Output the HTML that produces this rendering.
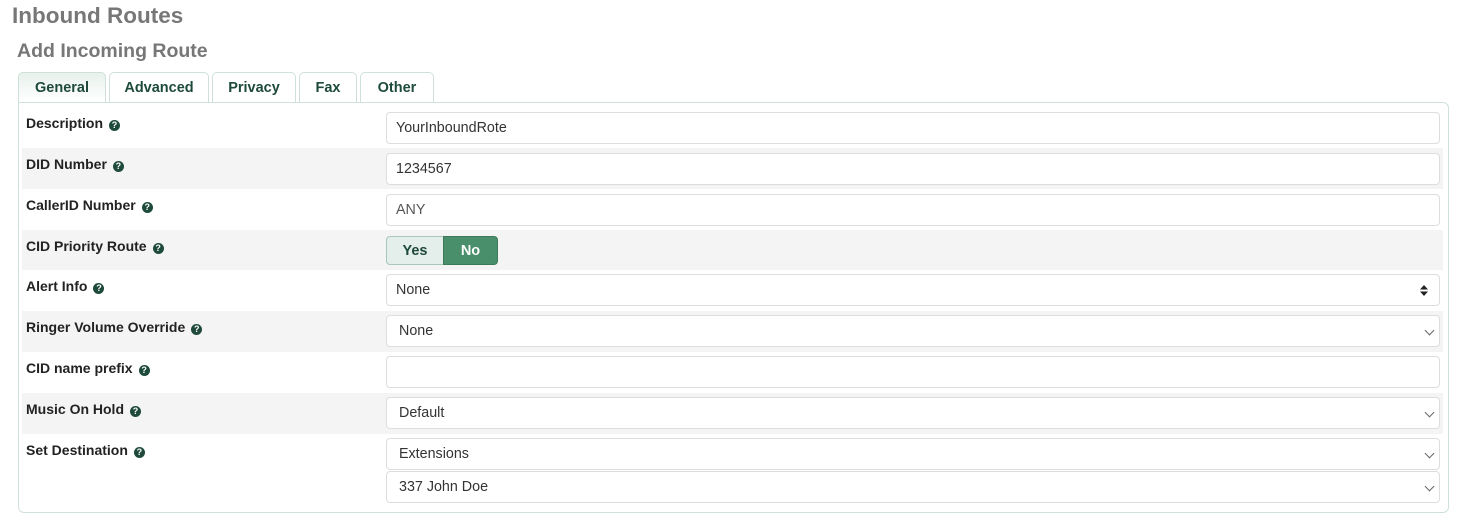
<!DOCTYPE html>
<html><head><style>
body{margin:0;width:1460px;height:525px;background:#fff;font-family:"Liberation Sans",sans-serif;position:relative;overflow:hidden}
.a{position:absolute}
h1{position:absolute;left:12px;top:3px;margin:0;font-size:22.5px;color:#777;font-weight:bold}
h2{position:absolute;left:17px;top:40px;margin:0;font-size:19.5px;color:#777;font-weight:bold}
.tab{position:absolute;top:72px;height:30px;border:1px solid #cfe0d8;border-bottom:none;border-radius:5px 5px 0 0;background:#fff;font-size:14.5px;font-weight:bold;color:#1e4a3c;text-align:center;line-height:30px;box-sizing:border-box}
.panel{position:absolute;left:18px;top:102px;width:1431px;height:411px;border:1px solid #cfe0d8;border-radius:0 6px 6px 6px;box-sizing:border-box}
.row{position:absolute;left:22px;width:1421px}
.g{background:#f4f4f4}
.lbl{position:absolute;left:4px;top:8px;font-size:14px;font-weight:bold;color:#222}
.q{display:inline-block;width:11px;height:11px;border-radius:50%;background:#1e4a3c;color:#fff;font-size:9px;line-height:11px;text-align:center;margin-left:6px;vertical-align:0px}
.in{position:absolute;left:386px;width:1054px;height:32px;border:1px solid #ddd;border-radius:4px;background:#fff;box-sizing:border-box;font-size:14.3px;color:#333;line-height:31px;padding-left:9px}
.in.s{padding-left:12px}
.chev{position:absolute;right:6px;top:11px;width:6px;height:6px;border-right:1px solid #666;border-bottom:1px solid #666;transform:rotate(45deg)}
</style></head><body>
<h1>Inbound Routes</h1>
<h2>Add Incoming Route</h2>
<div class="tab" style="left:18px;width:88px;background:linear-gradient(#e8f1ec,#fff)">General</div>
<div class="tab" style="left:109px;width:100px">Advanced</div>
<div class="tab" style="left:212px;width:84px">Privacy</div>
<div class="tab" style="left:299px;width:58px">Fax</div>
<div class="tab" style="left:360px;width:74px">Other</div>
<div class="panel"></div>
<div class="row" style="top:107px;height:41px"><div class="lbl">Description<span class="q">?</span></div></div>
<div class="row g" style="top:148px;height:41px"><div class="lbl">DID Number<span class="q">?</span></div></div>
<div class="row" style="top:189px;height:41px"><div class="lbl">CallerID Number<span class="q">?</span></div></div>
<div class="row g" style="top:230px;height:40px"><div class="lbl">CID Priority Route<span class="q">?</span></div></div>
<div class="row" style="top:270px;height:41px"><div class="lbl">Alert Info<span class="q">?</span></div></div>
<div class="row g" style="top:311px;height:41px"><div class="lbl">Ringer Volume Override<span class="q">?</span></div></div>
<div class="row" style="top:352px;height:41px"><div class="lbl">CID name prefix<span class="q">?</span></div></div>
<div class="row g" style="top:393px;height:41px"><div class="lbl">Music On Hold<span class="q">?</span></div></div>
<div class="row" style="top:434px;height:74px"><div class="lbl">Set Destination<span class="q">?</span></div></div>
<div class="in" style="top:112px">YourInboundRote</div>
<div class="in" style="top:153px">1234567</div>
<div class="in" style="top:194px;color:#555">ANY</div>
<div class="a" style="left:386px;top:236px;width:57px;height:29px;background:#e4eeea;border:1px solid #a9c7b9;border-right:none;border-radius:4px 0 0 4px;box-sizing:border-box;font-size:14.5px;font-weight:bold;color:#1e4a3c;text-align:center;line-height:28px">Yes</div>
<div class="a" style="left:443px;top:236px;width:55px;height:29px;background:#4a8f6b;border:1px solid #3d7a5a;border-radius:0 4px 4px 0;box-sizing:border-box;font-size:14.5px;font-weight:bold;color:#fff;text-align:center;line-height:28px">No</div>
<div class="in" style="top:274px">None<svg class="a" style="right:11px;top:10px" width="8" height="11" viewBox="0 0 8 11"><path d="M0 4.5L4 0L8 4.5Z M0 6.5L4 11L8 6.5Z" fill="#222"/></svg></div>
<div class="in s" style="top:315px">None<span class="chev"></span></div>
<div class="in" style="top:356px"></div>
<div class="in s" style="top:397px">Default<span class="chev"></span></div>
<div class="in s" style="top:438px">Extensions<span class="chev"></span></div>
<div class="in s" style="top:471px">337 John Doe<span class="chev"></span></div>
</body></html>
